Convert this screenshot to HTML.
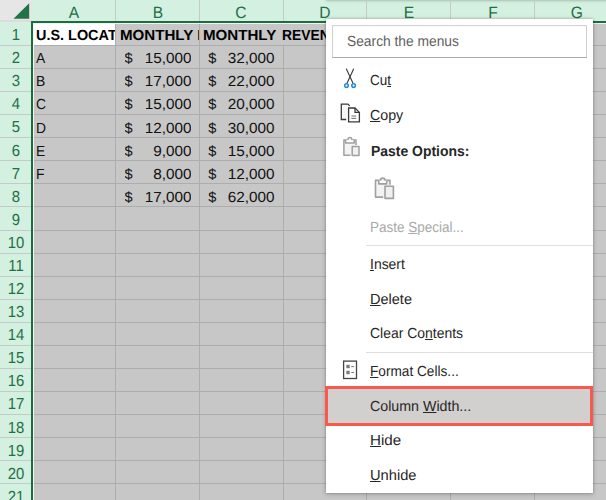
<!DOCTYPE html>
<html><head><meta charset="utf-8"><title>Excel column width</title>
<style>
html,body{margin:0;padding:0;}
body{width:606px;height:500px;overflow:hidden;position:relative;background:#c7c7c7;font-family:"Liberation Sans",sans-serif;text-rendering:geometricPrecision;}
.abs{position:absolute;}
#colhdr{left:0;top:0;width:606px;height:21px;background:#d3f0e0;}
#rowhdr{left:0;top:22px;width:31px;height:478px;background:#d3f0e0;}
#corner{left:0;top:0;width:32px;height:21px;background:#e6e6e6;}
.cl{position:absolute;width:83.8px;text-align:center;color:#1f6f47;font-size:16.4px;line-height:20px;height:21px;top:2.5px;transform:scaleX(0.95);}
.rl{position:absolute;left:0px;width:32px;text-align:center;color:#1f6f47;font-size:16px;height:23px;line-height:23px;transform:scaleX(0.93);}
.hsep{position:absolute;top:0;width:1px;height:21px;background:#c3cbc6;}
.rsep{position:absolute;left:0;width:31px;height:1px;background:#c3cbc6;}
.gv{position:absolute;top:23px;width:1px;height:477px;background:#adadad;}
.gh{position:absolute;left:33px;width:573px;height:1px;background:#adadad;}
.cell{position:absolute;font-size:14.6px;color:#111;white-space:nowrap;height:22px;line-height:22px;overflow:hidden;}
.cell span{display:inline-block;transform-origin:left center;}
.b{font-weight:bold;color:#000;}
.num{text-align:right;}
.num span{transform-origin:right center;}
#menu{left:326px;top:18.5px;width:266.8px;height:474.6px;background:#fff;box-shadow:0 1px 5px rgba(0,0,0,.24),0 0 2px rgba(0,0,0,.24);}
.mi{position:absolute;left:43.9px;font-size:14.6px;color:#262626;white-space:nowrap;height:20px;line-height:20px;transform-origin:left center;}
.mi u{text-decoration:underline;text-underline-offset:1px;text-decoration-thickness:1px;}
.dis{color:#a9a9a9;}
.sep{position:absolute;left:40px;right:0;height:1px;background:#e1dfdd;}
</style></head><body>

<div id="colhdr" class="abs"></div>
<div id="rowhdr" class="abs"></div>
<div class="abs" style="left:326px;top:-10px;width:300px;height:10px;box-shadow:0 0 3.5px rgba(0,0,0,.38)"></div>
<div class="cl" style="left:31.70px">A</div>
<div class="hsep" style="left:115.00px"></div>
<div class="cl" style="left:115.50px">B</div>
<div class="hsep" style="left:198.80px"></div>
<div class="cl" style="left:199.30px">C</div>
<div class="hsep" style="left:282.60px"></div>
<div class="cl" style="left:283.10px">D</div>
<div class="hsep" style="left:366.40px"></div>
<div class="cl" style="left:366.90px">E</div>
<div class="hsep" style="left:450.20px"></div>
<div class="cl" style="left:450.70px">F</div>
<div class="hsep" style="left:534.00px"></div>
<div class="cl" style="left:534.50px">G</div>
<div class="hsep" style="left:617.80px"></div>
<div class="rl" style="top:24.1px">1</div>
<div class="rsep" style="top:44.9px"></div>
<div class="rl" style="top:47.2px">2</div>
<div class="rsep" style="top:68.0px"></div>
<div class="rl" style="top:70.3px">3</div>
<div class="rsep" style="top:91.0px"></div>
<div class="rl" style="top:93.3px">4</div>
<div class="rsep" style="top:114.1px"></div>
<div class="rl" style="top:116.4px">5</div>
<div class="rsep" style="top:137.2px"></div>
<div class="rl" style="top:139.5px">6</div>
<div class="rsep" style="top:160.3px"></div>
<div class="rl" style="top:162.6px">7</div>
<div class="rsep" style="top:183.4px"></div>
<div class="rl" style="top:185.7px">8</div>
<div class="rsep" style="top:206.4px"></div>
<div class="rl" style="top:208.7px">9</div>
<div class="rsep" style="top:229.5px"></div>
<div class="rl" style="top:231.8px">10</div>
<div class="rsep" style="top:252.6px"></div>
<div class="rl" style="top:254.9px">11</div>
<div class="rsep" style="top:275.7px"></div>
<div class="rl" style="top:278.0px">12</div>
<div class="rsep" style="top:298.8px"></div>
<div class="rl" style="top:301.1px">13</div>
<div class="rsep" style="top:321.8px"></div>
<div class="rl" style="top:324.1px">14</div>
<div class="rsep" style="top:344.9px"></div>
<div class="rl" style="top:347.2px">15</div>
<div class="rsep" style="top:368.0px"></div>
<div class="rl" style="top:370.3px">16</div>
<div class="rsep" style="top:391.1px"></div>
<div class="rl" style="top:393.4px">17</div>
<div class="rsep" style="top:414.2px"></div>
<div class="rl" style="top:416.5px">18</div>
<div class="rsep" style="top:437.2px"></div>
<div class="rl" style="top:439.5px">19</div>
<div class="rsep" style="top:460.3px"></div>
<div class="rl" style="top:462.6px">20</div>
<div class="rsep" style="top:483.4px"></div>
<div class="rl" style="top:485.7px">21</div>
<div class="rsep" style="top:506.5px"></div>
<div id="corner" class="abs"></div>
<div class="abs" style="left:0;top:20px;width:31px;height:2px;background:#dcdcdc"></div>
<svg class="abs" style="left:0;top:0" width="32" height="22"><polygon points="13.5,18.8 29.2,3.2 29.2,18.8" fill="#217346"/></svg>
<div class="abs" style="left:33px;top:23px;width:82.3px;height:22px;background:#fff"></div>
<div class="gv" style="left:115.00px"></div>
<div class="gv" style="left:198.80px"></div>
<div class="gv" style="left:282.60px"></div>
<div class="gv" style="left:366.40px"></div>
<div class="gv" style="left:450.20px"></div>
<div class="gv" style="left:534.00px"></div>
<div class="gh" style="top:44.9px"></div>
<div class="gh" style="top:68.0px"></div>
<div class="gh" style="top:91.0px"></div>
<div class="gh" style="top:114.1px"></div>
<div class="gh" style="top:137.2px"></div>
<div class="gh" style="top:160.3px"></div>
<div class="gh" style="top:183.4px"></div>
<div class="gh" style="top:206.4px"></div>
<div class="gh" style="top:229.5px"></div>
<div class="gh" style="top:252.6px"></div>
<div class="gh" style="top:275.7px"></div>
<div class="gh" style="top:298.8px"></div>
<div class="gh" style="top:321.8px"></div>
<div class="gh" style="top:344.9px"></div>
<div class="gh" style="top:368.0px"></div>
<div class="gh" style="top:391.1px"></div>
<div class="gh" style="top:414.2px"></div>
<div class="gh" style="top:437.2px"></div>
<div class="gh" style="top:460.3px"></div>
<div class="gh" style="top:483.4px"></div>
<div class="gh" style="top:506.5px"></div>
<div class="abs" style="left:282.10px;top:24px;width:2px;height:20.5px;background:#c7c7c7"></div>
<div class="abs" style="left:33px;top:23px;width:573px;height:1px;background:#f1f1f1"></div>
<div class="abs" style="left:33px;top:23px;width:1px;height:477px;background:#f6f6f6"></div>
<div class="abs" style="left:31px;top:21px;width:575px;height:2px;background:#1b6d40"></div>
<div class="abs" style="left:31px;top:21px;width:2px;height:479px;background:#1b6d40"></div>
<div class="cell b" style="left:32.2px;top:25.2px;width:83.3px;"><span style="margin-left:4.0px;transform:scaleX(0.989)">U.S. LOCAT</span></div>
<div class="cell b" style="left:116.0px;top:25.2px;width:83.3px;"><span style="margin-left:4.2px;transform:scaleX(1.035)">MONTHLY E</span></div>
<div class="cell b" style="left:199.8px;top:25.2px;width:84px;"><span style="margin-left:3.6px;transform:scaleX(1.035)">MONTHLY</span></div>
<div class="cell b" style="left:281.5px;top:25.2px;width:60px;"><span style="transform:scaleX(0.948)">REVEN</span></div>
<div class="cell " style="left:32.2px;top:48.3px;width:83.3px;"><span style="margin-left:4.3px;transform:scaleX(0.95)">A</span></div>
<div class="cell" style="left:124.5px;top:48.3px;width:20px"><span>$</span></div>
<div class="cell num" style="left:116.0px;top:48.3px;width:75.3px"><span style="transform:scaleX(1.05)">15,000</span></div>
<div class="cell" style="left:208.3px;top:48.3px;width:20px"><span>$</span></div>
<div class="cell num" style="left:199.8px;top:48.3px;width:75.3px"><span style="transform:scaleX(1.05)">32,000</span></div>
<div class="cell " style="left:32.2px;top:71.4px;width:83.3px;"><span style="margin-left:4.3px;transform:scaleX(0.95)">B</span></div>
<div class="cell" style="left:124.5px;top:71.4px;width:20px"><span>$</span></div>
<div class="cell num" style="left:116.0px;top:71.4px;width:75.3px"><span style="transform:scaleX(1.05)">17,000</span></div>
<div class="cell" style="left:208.3px;top:71.4px;width:20px"><span>$</span></div>
<div class="cell num" style="left:199.8px;top:71.4px;width:75.3px"><span style="transform:scaleX(1.05)">22,000</span></div>
<div class="cell " style="left:32.2px;top:94.4px;width:83.3px;"><span style="margin-left:4.3px;transform:scaleX(0.95)">C</span></div>
<div class="cell" style="left:124.5px;top:94.4px;width:20px"><span>$</span></div>
<div class="cell num" style="left:116.0px;top:94.4px;width:75.3px"><span style="transform:scaleX(1.05)">15,000</span></div>
<div class="cell" style="left:208.3px;top:94.4px;width:20px"><span>$</span></div>
<div class="cell num" style="left:199.8px;top:94.4px;width:75.3px"><span style="transform:scaleX(1.05)">20,000</span></div>
<div class="cell " style="left:32.2px;top:117.5px;width:83.3px;"><span style="margin-left:4.3px;transform:scaleX(0.95)">D</span></div>
<div class="cell" style="left:124.5px;top:117.5px;width:20px"><span>$</span></div>
<div class="cell num" style="left:116.0px;top:117.5px;width:75.3px"><span style="transform:scaleX(1.05)">12,000</span></div>
<div class="cell" style="left:208.3px;top:117.5px;width:20px"><span>$</span></div>
<div class="cell num" style="left:199.8px;top:117.5px;width:75.3px"><span style="transform:scaleX(1.05)">30,000</span></div>
<div class="cell " style="left:32.2px;top:140.6px;width:83.3px;"><span style="margin-left:4.3px;transform:scaleX(0.95)">E</span></div>
<div class="cell" style="left:124.5px;top:140.6px;width:20px"><span>$</span></div>
<div class="cell num" style="left:116.0px;top:140.6px;width:75.3px"><span style="transform:scaleX(1.05)">9,000</span></div>
<div class="cell" style="left:208.3px;top:140.6px;width:20px"><span>$</span></div>
<div class="cell num" style="left:199.8px;top:140.6px;width:75.3px"><span style="transform:scaleX(1.05)">15,000</span></div>
<div class="cell " style="left:32.2px;top:163.7px;width:83.3px;"><span style="margin-left:4.3px;transform:scaleX(0.95)">F</span></div>
<div class="cell" style="left:124.5px;top:163.7px;width:20px"><span>$</span></div>
<div class="cell num" style="left:116.0px;top:163.7px;width:75.3px"><span style="transform:scaleX(1.05)">8,000</span></div>
<div class="cell" style="left:208.3px;top:163.7px;width:20px"><span>$</span></div>
<div class="cell num" style="left:199.8px;top:163.7px;width:75.3px"><span style="transform:scaleX(1.05)">12,000</span></div>
<div class="cell" style="left:124.5px;top:186.8px;width:20px"><span>$</span></div>
<div class="cell num" style="left:116.0px;top:186.8px;width:75.3px"><span style="transform:scaleX(1.05)">17,000</span></div>
<div class="cell" style="left:208.3px;top:186.8px;width:20px"><span>$</span></div>
<div class="cell num" style="left:199.8px;top:186.8px;width:75.3px"><span style="transform:scaleX(1.05)">62,000</span></div>
<div id="menu" class="abs">
<div class="abs" style="left:6px;top:6.5px;width:255px;height:33px;border:1px solid #cfcfcf;border-bottom-color:#aaa;box-sizing:border-box;"></div>
<div class="mi " style="top:13.50px;transform:scaleX(0.945);left:20.600000000000023px;color:#616161;">Search the menus</div>
<div class="abs" style="left:-1px;top:367.5px;width:268px;height:40px;background:#d2d0ce;border:3.4px solid #f9584a;box-sizing:border-box;"></div>
<div class="mi " style="top:52.50px;transform:scaleX(0.925);">Cu<u>t</u></div>
<div class="mi " style="top:87.00px;transform:scaleX(0.975);"><u>C</u>opy</div>
<div class="mi " style="top:123.90px;transform:scaleX(0.955);left:44.8px;"><b>Paste Options:</b></div>
<div class="mi dis" style="top:199.10px;transform:scaleX(0.925);">Paste <u>S</u>pecial...</div>
<div class="mi " style="top:236.30px;transform:scaleX(0.955);"><u>I</u>nsert</div>
<div class="mi " style="top:271.40px;transform:scaleX(0.995);"><u>D</u>elete</div>
<div class="mi " style="top:305.70px;transform:scaleX(0.955);">Clear Co<u>n</u>tents</div>
<div class="mi " style="top:343.40px;transform:scaleX(0.935);"><u>F</u>ormat Cells...</div>
<div class="mi " style="top:378.30px;transform:scaleX(0.975);">Column <u>W</u>idth...</div>
<div class="mi " style="top:412.60px;transform:scaleX(1.04);"><u>H</u>ide</div>
<div class="mi " style="top:447.40px;transform:scaleX(1.005);"><u>U</u>nhide</div>
<div class="sep" style="top:226.5px"></div>
<div class="sep" style="top:333.5px"></div>
<svg class="abs" style="left:0;top:0;overflow:visible" width="267" height="475" viewBox="326 18.5 267 475" fill="none">
<g stroke="#3a3a3a" stroke-width="1.1" stroke-linecap="round"><line x1="346.4" y1="68.6" x2="352.9" y2="82.6"/><line x1="353.6" y1="68.6" x2="347.1" y2="82.6"/></g>
<g stroke="#1e8bd4" stroke-width="1.5"><circle cx="346.5" cy="85.1" r="1.8"/><circle cx="353.6" cy="85.1" r="1.8"/></g>
<g stroke="#3b3a39" stroke-width="1.3" stroke-linejoin="miter"><path d="M346.2 119 H341.3 V103.6 H347.9 L349.7 105.4" fill="#f7f7f7"/><path d="M348.6 107.5 H355 L359.4 111.9 V121.3 H348.6 Z" fill="#fff"/><path d="M355 107.5 V111.9 H359.4"/></g>
<g stroke="#7a7a7a" stroke-width="1.1"><line x1="351.4" y1="115.5" x2="356.3" y2="115.5"/><line x1="351.4" y1="117.9" x2="356.3" y2="117.9"/></g>
<g stroke="#a0a0a0" stroke-width="1.5" stroke-linejoin="round"><path d="M343.9 139.6 H356.0 V145.9 H352.2 V154.8 H343.9 Z" fill="#f3f3f3" stroke="none"/><path d="M356.0 144.4 V139.6 H343.9 V154.8 H350.4"/><path d="M345.6 139.6 V142.4 H354.2 V139.6" fill="#fff"/><path d="M347.9 139.6 Q347.9 137.0 349.9 137.0 Q351.9 137.0 351.9 139.6" fill="#fff"/><rect x="352.2" y="145.9" width="6.800000000000011" height="9.199999999999989" fill="#f0f0f0"/></g>
<g stroke="#a0a0a0" stroke-width="1.6" stroke-linejoin="round"><path d="M375.5 179.9 H390.0 V185.8 H385.0 V196.6 H375.5 Z" fill="#f3f3f3" stroke="none"/><path d="M390.0 184.3 V179.9 H375.5 V196.6 H383.2"/><path d="M378.8 179.9 V183.4 H386.7 V179.9" fill="#fff"/><path d="M380.45 179.9 Q380.45 177.6 382.75 177.6 Q385.05 177.6 385.05 179.9" fill="#fff"/><rect x="385.0" y="185.8" width="8.399999999999977" height="12.099999999999994" fill="#f0f0f0"/></g>
<rect x="343.6" y="360.6" width="12.9" height="17.4" stroke="#444" stroke-width="1.3" fill="#fff"/>
<g fill="#7a7a7a"><rect x="346.3" y="364.3" width="3.4" height="3.4"/><rect x="346.3" y="370.3" width="3.4" height="3.4"/><rect x="351.3" y="365.5" width="2.6" height="1.1"/><rect x="351.3" y="371.5" width="2.6" height="1.1"/></g>
</svg>
</div>
</body></html>
